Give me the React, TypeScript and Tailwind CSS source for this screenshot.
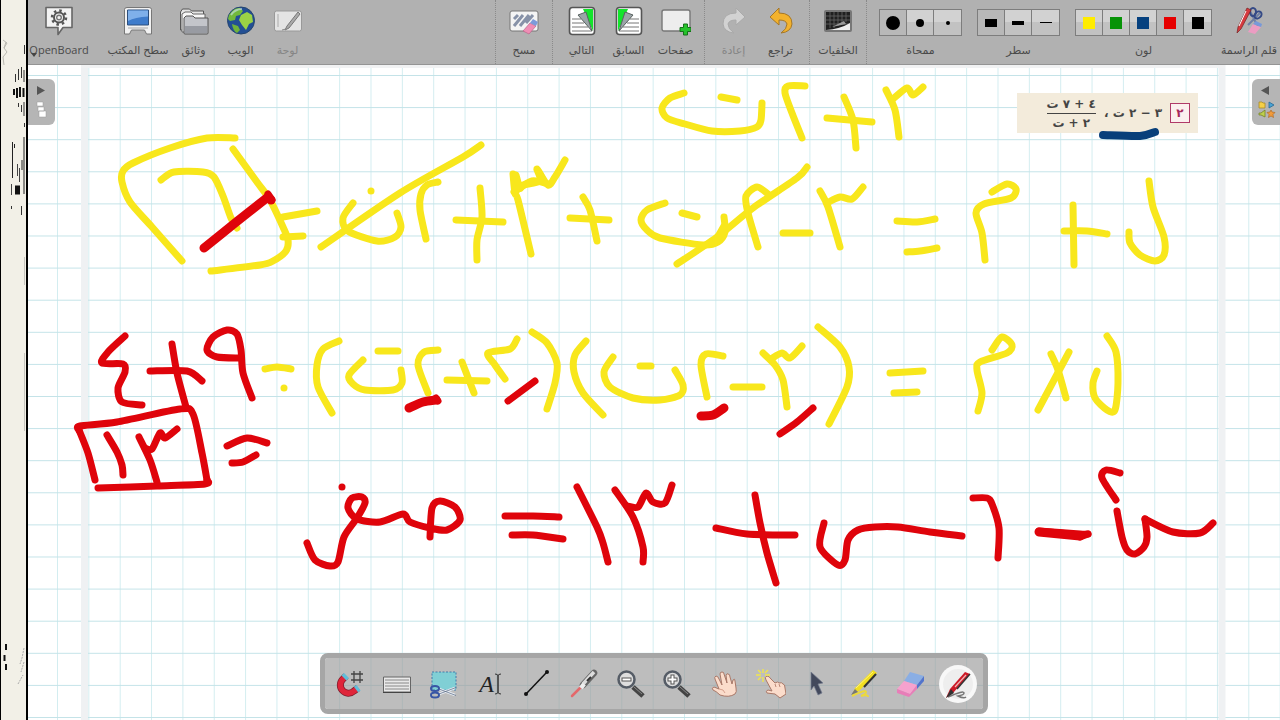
import type { ReactNode } from "react";

type Point = [number, number];

type Ink = {
  color: string;
  width: number;
  strokes: string[];
};

// every stroke is the list of points the pen went through
const inks: Ink[] = [
  {
    color: "#f8e71c",
    width: 7,
    strokes: [
      "684,93 670,98 662,108 667,118 685,124 712,131 740,131 757,127 761,120 762,103",
      "721,97 737,100",
      "805,86 788,86 785,93 792,113 802,138",
      "844,97 853,120 856,148",
      "827,118 872,122",
      "886,90 895,110 899,137",
      "893,99 907,88 913,95 923,87",
      "235,138 207,138 170,148 133,163 123,171 122,182 130,202 152,227 182,261",
      "233,149 257,182 270,200 283,227 288,240 286,251 273,261 260,265 211,271",
      "161,180 174,172 203,172 214,177 223,196 231,218 237,228",
      "283,217 317,211",
      "283,237 303,236",
      "321,247 400,193 463,157 481,145",
      "353,203 343,218 348,231 377,241 395,237 401,227 397,213",
      "371,191 371,191",
      "438,182 427,185 421,194 420,210 426,239",
      "480,188 482,217 477,240 477,260",
      "456,220 503,222",
      "513,174 515,193 518,200 531,254",
      "516,175 520,188 523,185 540,181 537,169 548,185 555,177 565,160",
      "514,192 532,181 548,184",
      "540,174 544,182",
      "583,197 590,210 597,241",
      "570,218 609,220",
      "665,203 647,210 641,220 647,230 660,238 703,245 718,242 725,232 724,217",
      "682,213 697,217",
      "677,264 717,237 753,208 797,178 807,167",
      "712,243 724,231",
      "716,240 724,226",
      "768,194 757,187 746,196 748,213 758,247",
      "783,233 810,233",
      "820,191 828,207 840,247",
      "827,203 840,197 852,199 863,187",
      "897,221 917,222 935,219",
      "907,252 920,251 937,248",
      "992,192 1007,184 1016,189 1011,198 984,204 976,213 982,233 985,260",
      "1073,205 1074,265",
      "1064,231 1087,231 1107,234",
      "1149,181 1153,207 1164,237 1164,255 1155,261 1140,255 1130,243 1129,232",
      "265,369 277,367 291,369",
      "284,388 284,388",
      "339,341 323,349 317,365 318,387 332,413",
      "363,360 349,375 353,384 365,390 393,390 402,383 401,370",
      "378,351 398,351",
      "438,350 424,352 418,365 428,393",
      "462,362 474,393",
      "447,380 487,381",
      "517,339 510,349 488,353 495,365 505,379",
      "532,332 547,343 557,363 555,383 547,409",
      "586,341 575,355 574,372 583,393 603,415",
      "613,357 604,372 610,387 633,398 660,400 680,395 683,385 675,370",
      "640,366 651,366",
      "723,356 706,354 701,365 707,397",
      "733,387 762,387",
      "763,353 775,365 783,380 787,407",
      "771,359 782,353 790,358 802,346",
      "818,327 840,347 849,367 847,387 829,424",
      "890,373 923,371",
      "894,393 917,392",
      "992,350 1002,337 1012,345 1007,353 980,362 977,370 982,393 978,411",
      "1069,352 1038,410",
      "1051,354 1058,370 1066,398",
      "1107,336 1116,352 1118,383 1115,410 1107,410 1095,398 1093,383 1097,371",
    ],
  },
  {
    color: "#df040b",
    width: 7,
    strokes: [
      "125,336 108,352 102,363 123,364 125,372 118,388 122,402 142,405",
      "172,344 177,373 186,407",
      "150,371 187,371 202,381",
      "240,358 217,357 207,350 213,337 227,330 237,334 241,350 243,373 252,398",
      "508,401 535,381",
      "780,434 797,422 813,408",
      "95,480 88,453 79,430",
      "79,430 80,426 117,422 180,409 193,414 202,453 207,480",
      "207,480 205,484 157,486 98,488",
      "107,435 117,452 122,465 123,475",
      "139,437 150,460 157,482",
      "145,448 152,449 160,433 165,438 177,429",
      "227,446 247,438 267,443",
      "232,463 243,462 256,455",
      "342,487 342,487",
      "307,543 315,560 330,566 338,562 344,537 357,518 365,503 362,497 352,498 348,508 357,519 380,522 403,514 410,522 430,528 447,530 460,520 455,507 440,501 432,508 430,537",
      "505,516 533,516 559,517",
      "512,535 533,535 563,539",
      "577,487 597,527 603,543 608,562",
      "615,490 633,517 643,547 643,562",
      "627,506 638,507 646,493 653,502 665,503 672,485",
      "755,495 760,523 767,553 776,583",
      "716,528 747,534 795,535",
      "824,523 820,547 838,565 845,560 848,540 858,530 875,527 898,527 930,532 962,536",
      "973,498 987,498 992,504 999,528 998,558",
      "1117,511 1122,537 1127,550 1135,554 1144,547 1147,537 1145,519",
      "1145,519 1173,532 1200,533 1213,523",
      "1120,473 1106,470 1102,478 1116,500",
      "1039,531 1080,534 1088,534",
      "1080,537 1088,534",
      "268,194 272,200",
      "436,398 438,401",
    ],
  },
  {
    color: "#df040b",
    width: 9,
    strokes: [
      "204,248 235,223 268,197",
      "268,197 271,200",
      "409,408 423,402 436,400",
      "701,416 713,415 724,408",
      "1039,532 1080,536",
    ],
  },
  { color: "#083f7a", width: 8, strokes: ["1103,135 1140,136 1155,132"] },
];

// rounds the corners of a polyline while still passing through its points
function smooth(stroke: string) {
  const pts = stroke.split(" ").map((p) => p.split(",").map(Number) as Point);
  let d = `M${pts[0][0]} ${pts[0][1]}`;
  for (let i = 0; i < pts.length - 1; i++) {
    const a = pts[i - 1] || pts[i];
    const b = pts[i];
    const c = pts[i + 1];
    const e = pts[i + 2] || c;
    d += `C${b[0] + (c[0] - a[0]) / 7} ${b[1] + (c[1] - a[1]) / 7} ${c[0] - (e[0] - b[0]) / 7} ${c[1] - (e[1] - b[1]) / 7} ${c[0]} ${c[1]}`;
  }
  return d;
}

const Icon = ({ children }: { children: ReactNode }) => (
  <svg viewBox="0 0 30 30" className="size-[30px] shrink-0" fill="none" aria-hidden="true">
    {children}
  </svg>
);

const OpenBoardIcon = () => (
  <Icon>
    <path d="M2 1.500h26v20h-9l-5 7v-7H2z" fill="#f3f3f3" stroke="#666" strokeWidth="1.600" strokeLinejoin="round" />
    <circle cx="15" cy="11.500" r="5" stroke="#555" strokeWidth="2" />
    <circle cx="15" cy="11.500" r="7" stroke="#555" strokeWidth="2.500" strokeDasharray="2.500 3" />
    <circle cx="15" cy="11.500" r="2.300" stroke="#777" strokeWidth="1.400" />
  </Icon>
);

const DesktopIcon = () => (
  <Icon>
    <path d="M4 1.500h22q2.500 0 2.500 2V28h-5l-2-4h-13l-2 4h-5V3.500q0-2 2.500-2z" fill="#f2f2f2" stroke="#777" />
    <path d="M4.500 4h21v15h-21z" fill="#3f7ccb" stroke="#2d4f7c" />
    <path d="M5 4.500h20v6Q12 11 5 15z" fill="#7fb0ea" />
    <path d="M5 22h20" stroke="#aaa" />
  </Icon>
);

const FoldersIcon = () => (
  <Icon>
    <path d="M1.500 24V6l2-3h7l2 2h12v19z" fill="#e5e5e5" stroke="#555" />
    <path d="M3 26V8l3-2h6l2 2h12v18z" fill="#f8f8f8" stroke="#666" />
    <path d="M5 27V12l2-2h7l2 2h13v15q0 1-1 1H6q-1 0-1-1z" fill="#c3c5ca" stroke="#555" />
    <path d="M6 20h22v7H6z" fill="#989ba2" />
  </Icon>
);

const GlobeIcon = () => (
  <Icon>
    <circle cx="15" cy="14.500" r="13.500" fill="#234f94" stroke="#24456f" />
    <path d="M3 9Q8 1 14 2l3 3-3 4-4 1-1 4-5 1-2-2z" fill="#72b93c" />
    <path d="M15 9l6-3 5 3 1 7-4 2-3 6-4-5-3-5z" fill="#9bd245" />
    <path d="M6 18l6 2 2 4-3 3q-4-2-5-9z" fill="#70b23b" />
    <path d="M5 9q4-6 11-6" stroke="#cfe4f7" strokeWidth="2" opacity=".6" />
  </Icon>
);

const BoardIcon = () => (
  <Icon>
    <rect x="1.500" y="5" width="27" height="20" rx="2" fill="#e4e4e4" stroke="#999" />
    <path d="M5 8v13" stroke="#aaa" />
    <path d="M25 6L14 20l-2 4 4-2L27 8z" fill="#aaa" stroke="#777" />
    <path d="M13 23l-4 1" stroke="#888" />
  </Icon>
);

const ClearIcon = () => (
  <Icon>
    <rect x="1" y="5" width="28" height="20" rx="2" fill="#f4f4f4" stroke="#777" />
    <path d="M5 13l4-4M5 20l9-11M11 20l9-11M17 17l7-8" stroke="#8792a8" strokeWidth="3" />
    <path d="M14 25l7-8 6 3-7 8z" fill="#f08db5" stroke="#b8668a" strokeWidth=".7" />
    <path d="M21 17l3-4 5 3-2 4z" fill="#7c9ada" />
  </Icon>
);

const PageTurnIcon = ({ flip }: { flip?: boolean }) => (
  <Icon>
    <g transform={flip ? "translate(30 0) scale(-1 1)" : undefined}>
      <rect x="2.500" y="1.500" width="25" height="27" rx="3" fill="#fff" stroke="#555" strokeWidth="1.600" />
      <path d="M5 13h9M5 17h12M5 21h16M5 25h20" stroke="#777" />
      <path d="M16 3h10v22z" fill="#13e52c" />
      <path d="M11 9l8-3 6 19z" fill="#9ba4a8" stroke="#59625f" />
    </g>
  </Icon>
);

const AddPageIcon = () => (
  <Icon>
    <rect x="1" y="4" width="28" height="21" rx="2" fill="#ededed" stroke="#777" strokeWidth="1.400" />
    <path d="M22.500 18h4v3.500H30v4h-3.500V29h-4v-3.500H19v-4h3.500z" fill="#25c32b" stroke="#16711a" />
  </Icon>
);

const TurnArrow = ({ redo }: { redo?: boolean }) => (
  <Icon>
    <g transform={redo ? "translate(30 0) scale(-1 1)" : undefined}>
      <path
        d="M4 11l9-9v5q13 0 13 11-1 8-11 9 6-4 6-9-1-4-8-4v5z"
        fill={redo ? "#d2d2d2" : "#f3b22c"}
        stroke={redo ? "#aaa" : "#a57727"}
        strokeLinejoin="round"
      />
    </g>
  </Icon>
);

const BackgroundsIcon = () => (
  <Icon>
    <rect x="1" y="4" width="28" height="22" rx="2" fill="#777" />
    <rect x="3" y="6" width="24" height="18" fill="#202020" />
    <path d="M3 10h24M3 14h24M3 18h24M7 6v16M11 6v16M15 6v14M19 6v11M23 6v10" stroke="#666" strokeWidth=".8" />
    <path d="M3 24q14-1 24-7v7z" fill="#eee" />
    <path d="M9 21l12-6 2 3z" fill="#999" />
  </Icon>
);

const PenBoxIcon = () => (
  <Icon>
    <path d="M16 5l8 16M26 7L14 19" stroke="#7180a4" strokeWidth="2" />
    <ellipse cx="19" cy="6" rx="3" ry="4" stroke="#354a86" strokeWidth="2" />
    <ellipse cx="24" cy="9" rx="3" ry="4" stroke="#354a86" strokeWidth="2" transform="rotate(45 24 9)" />
    <path d="M13 2l4 2L7 23l-4 4 1-6z" fill="#d63a3e" stroke="#722" strokeWidth=".7" />
    <path d="M12 5L5 20" stroke="#fff" />
    <path d="M14 26l5-8 8 3-6 7z" fill="#ec9cc2" />
    <path d="M19 18l3-3 6 3-1 3z" fill="#7899d8" />
  </Icon>
);

const MagnetIcon = () => (
  <Icon>
    <path d="M11 7L8 10a8 8 0 0 0 11 12l4-3" stroke="#7d1d2c" strokeWidth="7" />
    <path d="M11 7L8 10a8 8 0 0 0 11 12l4-3" stroke="#df253a" strokeWidth="5.500" />
    <path d="M11.500 6.500L9 9M23.500 18.600L21 20.500" stroke="#61bdd9" strokeWidth="7" />
    <path d="M19 2v12M25 2v12M16 5h12M16 11h12" stroke="#444" strokeWidth="1.300" />
  </Icon>
);

const KeyboardIcon = () => (
  <Icon>
    <path d="M1.500 8h27v15h-27z" fill="#e9e9e9" stroke="#666" />
    <path d="M3 11h24M3 14h24M3 17h24M3 20h24" stroke="#888" />
    <path d="M1 23.500h28" stroke="#444" />
  </Icon>
);

const CaptureIcon = () => (
  <Icon>
    <path d="M3 3h24v18H3z" fill="#80cfd5" stroke="#427ba9" strokeDasharray="2 1.500" />
    <path d="M10 20l16 6M10 25l16-6" stroke="#e8edf4" strokeWidth="2.500" />
    <path d="M10 20l17 6.500M10 25l17-6.500" stroke="#64748b" strokeWidth=".8" />
    <ellipse cx="6" cy="19.500" rx="4" ry="2.500" stroke="#3855a5" strokeWidth="2" />
    <ellipse cx="6" cy="26" rx="4" ry="2.500" stroke="#3855a5" strokeWidth="2" />
  </Icon>
);

const LineIcon = () => (
  <Icon>
    <path d="M4 25L25 3" stroke="#111" strokeWidth="1.500" />
    <circle cx="4" cy="25" r="2" fill="#111" />
    <circle cx="25" cy="3" r="2" fill="#111" />
  </Icon>
);

const LaserIcon = () => (
  <Icon>
    <path d="M13 17L3 27" stroke="#e4686b" strokeWidth="2.500" strokeLinecap="round" />
    <path d="M25 4L14 16" stroke="#666" strokeWidth="6.500" strokeLinecap="round" />
    <path d="M25 3L14 15" stroke="#ddd" strokeWidth="3.500" />
    <path d="M22 8l-4 4" stroke="#333" strokeWidth="2" />
    <path d="M15 15l-3 4" stroke="#eee" strokeWidth="4.500" />
  </Icon>
);

const ZoomIcon = ({ plus }: { plus?: boolean }) => (
  <Icon>
    <path d="M17 18l10 9" stroke="#444" strokeWidth="5" />
    <path d="M18 18l8 7" stroke="#888" />
    <circle cx="10.500" cy="10.500" r="8" fill="#dedede" stroke="#555c66" strokeWidth="2.500" />
    <path d={plus ? "M5.500 10.500h10M10.500 5.500v10" : "M5.500 10.500h10"} stroke="#555" strokeWidth="4" />
    <path d={plus ? "M6.500 10.500h8M10.500 6.500v8" : "M6.500 10.500h8"} stroke="#fff" strokeWidth="2" />
  </Icon>
);

const HandIcon = () => (
  <Icon>
    <path
      d="M11 26Q7 22 4 21q-2-2 1-3l5 2-4-10q-1-2 1-3 2 0 3 3l3 6-2-11q0-2 2-2t2 2l3 9-1-8q1-2 2-1 2 0 2 3l2 7 1-4q2-2 2 1l1 7q1 4-1 6-6 4-15 1z"
      fill="#fbdccb"
      stroke="#a97868"
      strokeLinejoin="round"
    />
    <path d="M10 20q5 0 6 4" stroke="#d6a18e" />
  </Icon>
);

const PlayIcon = () => (
  <Icon>
    <path
      d="M10 11q-2-3 1-4 2 0 4 3l4 4q3-2 4 0 3-1 4 1 2 0 2 4l1 6-6 4-5-4-8-1q-2-2 1-3l4 1z"
      fill="#fbdccb"
      stroke="#a97868"
      strokeLinejoin="round"
    />
    <path d="M19 15l1 3M23 15l1 3" stroke="#bb8877" />
    <path d="M0 6h5M9 6h5M7 0v4M7 8v5M2 1l3 3M12 1L9 4M2 11l3-3" stroke="#f1e54b" strokeWidth="1.400" />
  </Icon>
);

const PointerIcon = () => (
  <Icon>
    <path d="M8 3l12 11-5 1 4 9-4 2-4-9-3 4z" fill="#43495c" stroke="#777e91" strokeWidth=".7" />
  </Icon>
);

const HighlighterIcon = () => (
  <Icon>
    <path d="M3 27q14-7 14-4 0 2-5 4 7-2 7 1" stroke="#ecd93c" strokeWidth="2" />
    <path d="M24 1l4 3L10 22l-7 4 3-7z" fill="#f2de20" />
    <path d="M27 5L15 18" stroke="#333" strokeWidth="2" />
    <path d="M24 3L7 19" stroke="#fff27a" />
    <path d="M2 26l4-6 3 3z" fill="#777" />
  </Icon>
);

const EraserIcon = () => (
  <Icon>
    <path d="M8 12L14 3l14 4-7 9z" fill="#8aaee4" />
    <path d="M21 16l7-9v5l-7 8z" fill="#5274cc" />
    <path d="M1 20l7-8 13 4-7 9z" fill="#f6a2ce" />
    <path d="M1 20v4l12 4 8-8v-4l-7 9z" fill="#e87db8" />
  </Icon>
);

const PenIcon = () => (
  <svg viewBox="0 0 38 38" className="size-[38px] shrink-0" fill="none" aria-hidden="true">
    <circle cx="19" cy="19" r="19" fill="#f8f8f8" />
    <circle cx="19" cy="19" r="15" fill="#eee" />
    <path d="M9 32q16-7 16-4 0 2-6 3 6 3 8 1" stroke="#777" strokeWidth="1.500" />
    <path d="M26 7l5 2-17 19-7 5 4-9z" fill="#cd1927" />
    <path d="M31 9L18 24" stroke="#333" strokeWidth="1.500" />
    <path d="M7 33l5-9 3 4z" fill="#333" />
    <path d="M27 10L16 22" stroke="#efb5b5" strokeWidth="1.200" />
  </svg>
);

type ToolProps = {
  label: string;
  width?: string;
  faded?: boolean;
  children: ReactNode;
};

const Tool = ({ label, width = "w-[47px]", faded, children }: ToolProps) => (
  <button
    className={`flex shrink-0 flex-col items-center gap-1 pt-1.5 whitespace-nowrap ${width} ${faded ? "text-[#858585]" : "text-[#4a4a4a]"}`}
  >
    {children}
    <span className="h-5 leading-5">{label}</span>
  </button>
);

const Separator = () => <div className="h-full w-px shrink-0 border-l border-dotted border-[#8a8a8a]" />;

type PickerProps = {
  label: string;
  items: { name: string; mark: string; active?: boolean }[];
};

const Picker = ({ label, items }: PickerProps) => (
  <div role="group" aria-label={label} className="flex shrink-0 flex-col items-center gap-1 pt-[9px] text-[#4a4a4a]">
    <div className="flex h-[27px] divide-x divide-[#7d7d7d] border border-[#7d7d7d]">
      {items.map((item) => (
        <button
          key={item.name}
          aria-label={item.name}
          aria-pressed={!!item.active}
          className={`flex w-[27px] items-center justify-center ${item.active ? "bg-[#b8b8b8]" : "bg-linear-to-b from-[#d2d2d2] from-50% to-[#c2c2c2] to-50%"}`}
        >
          <span className={item.mark} />
        </button>
      ))}
    </div>
    <span className="h-5 leading-5">{label}</span>
  </div>
);

const erasers = [
  { name: "ممحاة كبيرة", mark: "size-3.5 rounded-full bg-black", active: true },
  { name: "ممحاة متوسطة", mark: "size-2 rounded-full bg-black" },
  { name: "ممحاة صغيرة", mark: "size-1 rounded-full bg-black" },
];

const lines = [
  { name: "سطر عريض", mark: "h-2 w-3 bg-black", active: true },
  { name: "سطر متوسط", mark: "h-1 w-3 bg-black" },
  { name: "سطر رفيع", mark: "h-px w-3 bg-black" },
];

const colors = [
  { name: "أصفر", mark: "size-3 bg-[#ffec00]" },
  { name: "أخضر", mark: "size-3 bg-[#079307]" },
  { name: "أزرق", mark: "size-3 bg-[#06417f]" },
  { name: "أحمر", mark: "size-3 bg-[#e60000]", active: true },
  { name: "أسود", mark: "size-3 bg-black" },
];

const TopBar = () => (
  <header className="flex h-[65px] shrink-0 border-b border-[#949494] bg-[#b1b1b1] text-[11px]">
    <div className="relative flex">
      <Tool label="OpenBoard" width="w-[62px]">
        <OpenBoardIcon />
      </Tool>
      <svg viewBox="0 0 6 6" className="absolute top-[52px] left-[3px] size-1.5" aria-hidden="true">
        <path d="M0 1h6L3 5z" fill="#444" />
      </svg>
    </div>
    <div className="ml-4 flex">
      <Tool label="سطح المكتب" width="w-16">
        <DesktopIcon />
      </Tool>
      <Tool label="وثائق">
        <FoldersIcon />
      </Tool>
      <Tool label="الويب">
        <GlobeIcon />
      </Tool>
      <Tool label="لوحة" faded>
        <BoardIcon />
      </Tool>
    </div>
    <div className="ml-auto flex">
      <Separator />
      <Tool label="مسح" width="w-14">
        <ClearIcon />
      </Tool>
      <Separator />
      <div className="flex px-[5px]">
        <Tool label="التالي">
          <PageTurnIcon />
        </Tool>
        <Tool label="السابق">
          <PageTurnIcon flip />
        </Tool>
        <Tool label="صفحات">
          <AddPageIcon />
        </Tool>
      </div>
      <Separator />
      <div className="flex px-[5px]">
        <Tool label="إعادة" faded>
          <TurnArrow redo />
        </Tool>
        <Tool label="تراجع">
          <TurnArrow />
        </Tool>
      </div>
      <Separator />
      <Tool label="الخلفيات" width="w-14">
        <BackgroundsIcon />
      </Tool>
      <Separator />
    </div>
    <div className="flex gap-[15px] pl-3">
      <Picker label="ممحاة" items={erasers} />
      <Picker label="سطر" items={lines} />
      <Picker label="لون" items={colors} />
    </div>
    <Tool label="قلم الراسمة" width="ml-1.5 w-[62px]">
      <PenBoxIcon />
    </Tool>
  </header>
);

const Sheet = () => (
  <svg
    viewBox="28 65 1252 655"
    preserveAspectRatio="xMinYMin slice"
    className="absolute inset-0 size-full"
    fill="none"
    role="img"
    aria-label="لوحة الكتابة"
  >
    <defs>
      <pattern id="squares" x="57" y="75" width="31.350" height="32.100" patternUnits="userSpaceOnUse">
        <path d="M.5 0v32.100" stroke="#d3edf0" />
        <path d="M0 .5h31.350" stroke="#c3e3e8" />
      </pattern>
    </defs>
    <rect x="28" y="65" width="1252" height="655" fill="url(#squares)" />
    <path d="M84.500 65v655M1222 65v655" stroke="#eff1f3" strokeWidth="7" />
    <path d="M81 66.500h1144" stroke="#f1f2f3" strokeWidth="3" />
  </svg>
);

const Handwriting = () => (
  <svg
    viewBox="28 65 1252 655"
    preserveAspectRatio="xMinYMin slice"
    className="absolute inset-0 size-full"
    fill="none"
    strokeLinecap="round"
    strokeLinejoin="round"
    aria-hidden="true"
  >
    {inks.map((ink, i) => (
      <g key={i} stroke={ink.color} strokeWidth={ink.width}>
        {ink.strokes.map((stroke) => (
          <path key={stroke} d={smooth(stroke)} />
        ))}
      </g>
    ))}
  </svg>
);

// clipping from the textbook, pasted onto the sheet
const Exercise = () => (
  <div
    dir="rtl"
    className="absolute top-7 right-[82px] flex h-10 w-[181px] items-center gap-2 bg-[#f3ebdb] pr-2 text-[12px] font-bold text-[#444] [font-family:'DejaVu_Sans',sans-serif]"
  >
    <span className="flex h-5 w-5 items-center justify-center border border-[#b03a68] bg-[#fbf0ee] text-[#a8285a]">٢</span>
    <span className="whitespace-nowrap">٣ − ٢ ت ،</span>
    <span className="flex flex-col text-center leading-[18px] whitespace-nowrap">
      <span className="border-b border-[#444]">٤ + ٧ ت</span>
      <span>٢ + ت</span>
    </span>
  </div>
);

const SideTabs = () => (
  <>
    <button
      aria-label="صفحات"
      className="absolute top-3.5 left-0 flex h-[46px] w-[27px] items-center justify-center rounded-r-md bg-[#b5b5b5]"
    >
      <svg viewBox="0 0 27 46" className="h-[46px] w-[27px]" aria-hidden="true">
        <path d="M9 7l8 4.500L9 16z" fill="#555" />
        <path d="M9 23h6v4H9zM10 28h6v4h-6zM11 32h7v6h-7z" fill="#fff" stroke="#999" strokeWidth=".5" />
      </svg>
    </button>
    <button
      aria-label="مكتبة"
      className="absolute top-3.5 right-0 flex h-[46px] w-7 items-center justify-center rounded-l-md bg-[#b5b5b5]"
    >
      <svg viewBox="0 0 28 46" className="h-[46px] w-7" fill="none" aria-hidden="true">
        <path d="M17 7l-8 4.500 8 4.500z" fill="#555" />
        <path d="M7 23h3l1 1h2v5H7z" fill="#f4cf46" stroke="#a88a2a" strokeWidth=".8" />
        <path d="M17 23l5 3-5 3z" fill="#4aa3d5" stroke="#276a94" strokeWidth=".8" />
        <path d="M7 34h2l4-3v7l-4-2H7z" fill="#bed04c" stroke="#768326" strokeWidth=".8" />
        <path d="M19 31l1 2 3 .5-2 2 .5 3-2.500-1.500-2.500 1.500.5-3-2-2 3-.5z" fill="#f19a3a" stroke="#a8621d" strokeWidth=".6" />
      </svg>
    </button>
  </>
);

const palette = [
  { name: "محاذاة", icon: <MagnetIcon /> },
  { name: "لوحة المفاتيح", icon: <KeyboardIcon /> },
  { name: "التقاط", icon: <CaptureIcon /> },
  {
    name: "نص",
    icon: (
      <span className="flex items-center text-[24px] leading-none text-[#222] [font-family:'Liberation_Serif',serif]">
        <i>A</i>
        <svg viewBox="0 0 8 24" className="h-6 w-2" fill="none" aria-hidden="true">
          <path d="M1 2q3 0 3 2v16q0 2-3 2M7 2q-3 0-3 2v16q0 2 3 2" stroke="#333" />
        </svg>
      </span>
    ),
  },
  { name: "خط", icon: <LineIcon /> },
  { name: "مؤشر ليزر", icon: <LaserIcon /> },
  { name: "تصغير", icon: <ZoomIcon /> },
  { name: "تكبير", icon: <ZoomIcon plus /> },
  { name: "تحريك الصفحة", icon: <HandIcon /> },
  { name: "تفاعل", icon: <PlayIcon /> },
  { name: "تحديد", icon: <PointerIcon /> },
  { name: "تمييز", icon: <HighlighterIcon /> },
  { name: "ممحاة", icon: <EraserIcon /> },
  { name: "قلم", icon: <PenIcon /> },
];

const Palette = () => (
  <div className="absolute inset-x-0 bottom-1.5 flex justify-center">
    <div className="flex h-[61px] w-[668px] items-center rounded-lg border-[5px] border-[#a6a6a6] bg-[#999]/65 bg-clip-padding px-0.5">
      {palette.map((tool) => (
        <button key={tool.name} aria-label={tool.name} className="flex h-full min-w-0 flex-1 items-center justify-center">
          {tool.icon}
        </button>
      ))}
    </div>
  </div>
);

// margin of the printed page that shows behind the window
const PageMargin = () => (
  <aside className="w-7 shrink-0 overflow-hidden border-r-2 border-l border-r-black border-l-black bg-[#f2f0e7]">
    <svg viewBox="1 0 25 720" preserveAspectRatio="xMinYMin slice" className="h-full w-[25px]" fill="none" aria-hidden="true">
      <path d="M3 40l4 3-3 5 3 4-4 5 1 8M6 42l-2 6" stroke="#b9b8b0" />
      <path d="M24.500 45v9M21.500 67v11M18.500 69v11M15.500 74v8M24 70v12M24 102v14M21.500 105v7M18.500 103v4M24.500 123v4" stroke="#333" />
      <path d="M14 89v6M17 88v10M20 87v10M23.500 88v9" stroke="#111" strokeWidth="2" />
      <path d="M12.500 142v36M24 137v57M22 160v10M14.500 144v4" stroke="#222" />
      <path d="M17.500 164v12M19.500 168v14M11.500 184v11" stroke="#444" />
      <path d="M15 190h5" stroke="#111" strokeWidth="9" />
      <path d="M11.500 206v3M21.500 206v9" stroke="#333" />
      <path d="M24.500 257v28M24.500 353v78" stroke="#c6c5be" />
      <path d="M6 644v6M4.500 655v6M6 664v6" stroke="#111" strokeWidth="2" />
      <path d="M24 648l-2 10-2 6M24 662l-3 10M18 684l5-9" stroke="#aaa" strokeDasharray="2 1" />
    </svg>
  </aside>
);

export default function App() {
  return (
    <div className="flex h-screen overflow-hidden [font-family:'Open_Sans','DejaVu_Sans',sans-serif]">
      <PageMargin />
      <div className="flex min-w-0 flex-1 flex-col">
        <TopBar />
        <main className="relative flex-1 overflow-hidden bg-white">
          <Sheet />
          <Exercise />
          <Handwriting />
          <SideTabs />
          <Palette />
        </main>
      </div>
    </div>
  );
}
